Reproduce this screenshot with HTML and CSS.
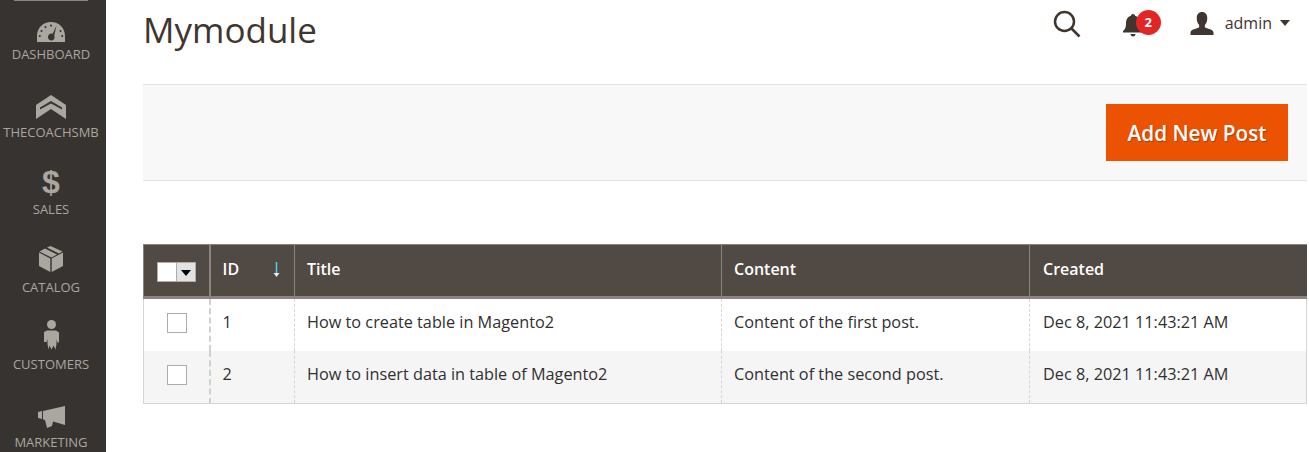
FILE: index.html
```html
<!DOCTYPE html>
<html lang="en">
<head>
  <meta charset="UTF-8" />
  <title>Mymodule</title>
  <link rel="stylesheet" href="styles.css">
</head>
<body>
  <nav class="menu">
    <div class="menu-rule"></div>
    <a class="menu-item">
      <svg class="menu-icon icon-dash" viewBox="0 0 28 20"><path fill-rule="evenodd" d="M0 20v-6C0 6 6 0 14 0s14 6 14 14v6zM14 2.500a1 1 0 1 0 .01 0zM8.500 4a1 1 0 1 0 .01 0zM4.500 8a1 1 0 1 0 .01 0zM2.800 13a1 1 0 1 0 .01 0zM23.500 8a1 1 0 1 0 .01 0zM25.200 13a1 1 0 1 0 .01 0zM19.500 3.500l-3.800 8.200c-2-.7-4.700.5-4.700 3.300 0 2.200 1.500 3.500 3.200 3.500 2.800 0 4-2.700 3-4.800z"/></svg>
      <span>Dashboard</span>
    </a>
    <a class="menu-item">
      <svg class="menu-icon icon-coach" viewBox="0 0 30 24"><path d="M15 0l15 10v14l-15-10L0 24V10z"/><path fill="#373330" d="M15 6l11 6.500v2L15 8.500 4 14.500v-2z"/></svg>
      <span>TheCoachSMB</span>
    </a>
    <a class="menu-item">
      <span class="menu-dollar">$</span>
      <span>Sales</span>
    </a>
    <a class="menu-item">
      <svg class="menu-icon icon-box" viewBox="0 0 24 26"><path d="M11.300 12.500L0 6.500V20l11.300 6zM12.700 12.500V26L24 20V6.500zM8 1.500L11.500 0l12 5.500-3.500 2zM6 2.500l12 6-5.500 3L.5 5.500z"/></svg>
      <span>Catalog</span>
    </a>
    <a class="menu-item">
      <svg class="menu-icon icon-person" viewBox="0 0 15 30"><circle cx="7.500" cy="4.500" r="4.500"/><path d="M3 10.500h9l3 2v10h-1.500l-1-3v4.500l-1 5.500-2-4-2 4-2-4-1 4-1-5.500v-5l-1 3H0v-10z"/></svg>
      <span>Customers</span>
    </a>
    <a class="menu-item">
      <svg class="menu-icon icon-horn" viewBox="0 0 27 22"><path d="M0 6l4-1v8l-4-1zM5 5l22-5v19L15 15.500 14 20l-5 2-2-8-2-.5z"/></svg>
      <span>Marketing</span>
    </a>
  </nav>

  <main class="page">
    <header class="top">
      <h1>Mymodule</h1>
      <div class="top-actions">
        <svg class="icon-search" viewBox="0 0 28 28"><circle cx="11.500" cy="11.500" r="9.500"/><path d="M18.500 18.500l8 8"/></svg>
        <div class="bell">
          <svg viewBox="0 0 20 24"><path d="M10 1c1.200 0 2 .8 2 1.800 3.500 1 5 4 5 7.700 0 4 1 6 3 7.500v1.500H0V18c2-1.500 3-3.500 3-7.500 0-3.700 1.500-6.700 5-7.700C8 1.800 8.800 1 10 1zM7.500 21h5c0 1.500-1 2.500-2.500 2.500S7.500 22.500 7.500 21z"/></svg>
          <span class="bell-count">2</span>
        </div>
        <div class="user">
          <svg viewBox="0 0 24 24"><path d="M12 0c3.500 0 5.500 2.500 5.500 6.500 0 3-1 5.500-2.500 7v2.500c2 1.500 9 2 9 5.500V24H0v-2.500C0 18 7 17.500 9 16v-2.500C7.500 12 6.500 9.500 6.500 6.500 6.500 2.500 8.500 0 12 0z"/></svg>
          <span>admin</span>
          <i class="caret"></i>
        </div>
      </div>
    </header>

    <div class="actions">
      <button class="btn-primary">Add New Post</button>
    </div>

    <table class="grid">
      <colgroup>
        <col class="col-check"><col class="col-id"><col class="col-title"><col class="col-content"><col class="col-created">
      </colgroup>
      <thead>
        <tr>
          <th class="cell-check"><span class="select-all"><i></i><b></b></span></th>
          <th><div class="th-id">ID <svg class="sort" viewBox="0 0 7 15"><path d="M3.500 0v13"/><path class="sort-head" d="M.5 11h6l-3 4z"/></svg></div></th>
          <th>Title</th>
          <th>Content</th>
          <th>Created</th>
        </tr>
      </thead>
      <tbody>
        <tr>
          <td class="cell-check"><span class="box"></span></td>
          <td>1</td>
          <td>How to create table in Magento2</td>
          <td>Content of the first post.</td>
          <td>Dec 8, 2021 11:43:21 AM</td>
        </tr>
        <tr>
          <td class="cell-check"><span class="box"></span></td>
          <td>2</td>
          <td>How to insert data in table of Magento2</td>
          <td>Content of the second post.</td>
          <td>Dec 8, 2021 11:43:21 AM</td>
        </tr>
      </tbody>
    </table>
  </main>
</body>
</html>
```

FILE: styles.css
```css
* { box-sizing: border-box; }
html, body { height: 100%; }
body {
  margin: 0;
  display: flex;
  overflow: hidden;
  background: #fff;
  color: #41362f;
  font-family: "Open Sans", sans-serif;
  font-size: 14px;
}

/* left menu */
.menu { flex: 0 0 106px; height: 452px; padding-right: 4px; background: #373330; overflow: hidden; color: #aaa6a0; }
.menu-rule { width: 74px; height: 1px; margin: 0 auto; background: #8a8580; }
.menu-item { display: flex; flex-direction: column; align-items: center; justify-content: flex-end; height: 77.6px; font-size: 13px; line-height: 18px; text-transform: uppercase; white-space: nowrap; }
.menu-item:first-of-type { height: 62px; }
.menu-icon { display: block; fill: #aaa6a0; }
.icon-dash { width: 28px; height: 20px; margin-bottom: 3px; }
.icon-coach { width: 30px; height: 24px; margin-bottom: 4px; }
.icon-box { width: 24px; height: 26px; margin-bottom: 6px; }
.icon-person { width: 15px; height: 30px; margin-bottom: 5px; }
.icon-horn { width: 27px; height: 22px; margin-bottom: 5px; }
.menu-dollar { font-family: "Liberation Sans", sans-serif; font-size: 32px; line-height: 32px; font-weight: 700; margin-bottom: 2px; }

/* page */
.page { flex: 1; min-width: 0; padding-left: 37px; padding-right: 2px; }
.top { display: flex; justify-content: space-between; height: 84px; padding-right: 17px; }
h1 { margin: 8px 0 0; font-size: 35px; line-height: 44px; font-weight: 400; color: #41362f; }
.top-actions { display: flex; align-items: flex-start; padding-top: 10px; }
.icon-search { width: 28px; height: 28px; fill: none; stroke: #41362f; stroke-width: 2.500; margin-right: 42px; }
.bell { position: relative; width: 20px; height: 24px; margin-top: 3px; margin-right: 47px; }
.bell svg { display: block; width: 20px; height: 24px; fill: #41362f; }
.bell-count { position: absolute; left: 13px; top: -3px; width: 25px; height: 25px; border-radius: 50%; background: #e22626; color: #fff; font-size: 13px; font-weight: 700; line-height: 25px; text-align: center; }
.user { display: flex; align-items: center; height: 26px; font-size: 16px; }
.user svg { width: 24px; height: 23px; fill: #41362f; margin-right: 11px; }
.caret { width: 0; height: 0; margin-left: 8px; border: 5px solid transparent; border-top: 6px solid #41362f; border-bottom: 0; }

.actions { display: flex; justify-content: flex-end; align-items: center; height: 97px; padding-right: 19px; background: #f8f8f8; border-top: 1px solid #e3e3e3; border-bottom: 1px solid #e3e3e3; }
.btn-primary { width: 182px; height: 57px; border: 0; background: #eb5202; color: #fff; font-family: inherit; font-size: 20.700px; font-weight: 600; text-shadow: 1px 1px 1px rgba(0,0,0,.25); }

/* grid */
.grid { width: 1164px; margin-top: 63px; border-collapse: collapse; table-layout: fixed; }
.col-check { width: 66px; }
.col-id { width: 85px; }
.col-title { width: 427px; }
.col-content { width: 308px; }
th { height: 53px; padding: 0 13px 3px 12px; background: #514943; color: #fff; font-size: 16px; font-weight: 600; text-align: left; border-top: 1px solid #8a837f; border-left: 1px solid #8a837f; border-bottom: 3px solid #8a837f; }
th:last-child { padding-left: 13px; }
th.cell-check { border-right: 2px solid #8a837f; }
.th-id { display: flex; justify-content: space-between; align-items: center; }
.sort { width: 7px; height: 15px; margin-right: 1px; fill: none; stroke: #5cc8f2; stroke-width: 1.500; }
.sort-head { fill: #d5f3ff; stroke: none; }
td { height: 53px; padding: 0 13px 5px 12px; font-size: 16.250px; color: #303030; border-left: 1px dashed #d6d6d6; }
td:last-child { padding-left: 13px; }
tbody tr:nth-child(2) td { background: #f5f5f5; border-bottom: 1px solid #d6d6d6; }
td:first-child { border-left: 1px solid #d6d6d6; }
td:last-child { border-right: 1px solid #d6d6d6; }
td.cell-check { border-right: 2px dashed #d0d0d0; text-align: center; padding: 0 0 6px 2px; }
.box { display: inline-block; width: 20px; height: 20px; background: #fff; border: 1px solid #adadad; vertical-align: middle; }
th.cell-check { text-align: center; padding: 0; }
.select-all { display: inline-flex; width: 39px; height: 20px; vertical-align: middle; border: 1px solid #adadad; }
.select-all i { flex: 1; background: #fff; }
.select-all b { position: relative; width: 19px; background: #e3e3e3; border-left: 1px solid #adadad; }
.select-all b::after { content: ""; position: absolute; left: 4px; top: 7px; border: 5px solid transparent; border-top: 6px solid #000; border-bottom: 0; }
```
